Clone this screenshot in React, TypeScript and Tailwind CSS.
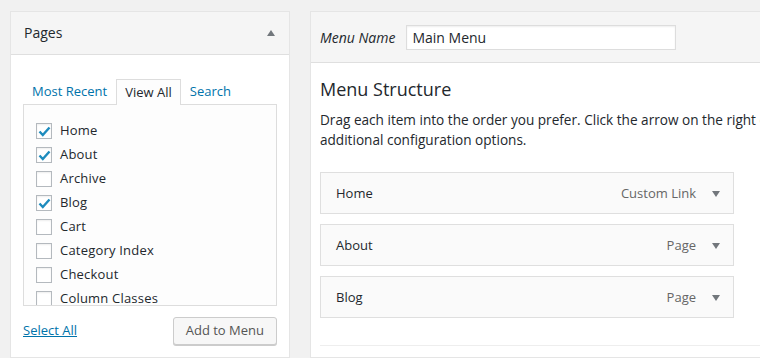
import React from 'react';

const pages = [
    { title: 'Home', checked: true },
    { title: 'About', checked: true },
    { title: 'Archive', checked: false },
    { title: 'Blog', checked: true },
    { title: 'Cart', checked: false },
    { title: 'Category Index', checked: false },
    { title: 'Checkout', checked: false },
    { title: 'Column Classes', checked: false },
];

const menuItems = [
    { title: 'Home', type: 'Custom Link' },
    { title: 'About', type: 'Page' },
    { title: 'Blog', type: 'Page' },
];

function Check({ checked }: { checked: boolean }) {
    return (
        <span className="w-4 h-4 shrink-0 border border-[#b4b9be] bg-white flex items-center justify-center shadow-[inset_0_1px_2px_rgba(0,0,0,0.07)]">
            {checked && (
                <svg width="13" height="11" viewBox="0 0 13 11">
                    <path d="M1.5 5.5 L4.8 9 L11.5 1.5" fill="none" stroke="#1e8cbe" strokeWidth="2.4" />
                </svg>
            )}
        </span>
    );
}

function Caret({ up = false }: { up?: boolean }) {
    return (
        <svg width="8" height="6" viewBox="0 0 8 6">
            <path d={up ? 'M0 6 L4 0 L8 6 Z' : 'M0 0 L8 0 L4 6 Z'} fill="#72777c" />
        </svg>
    );
}

export default function App() {
    return (
        <div
            className="h-[358px] overflow-hidden bg-[#f1f1f1] flex items-stretch pt-[11px] pl-[10px] text-[13px] text-[#23282d]"
            style={{ fontFamily: '"Open Sans", "Liberation Sans", sans-serif' }}
        >
            {/* Pages box */}
            <div className="w-[280px] shrink-0 border border-[#e5e5e5] bg-white flex flex-col">
                <div className="h-[43px] bg-[#f5f5f5] border-b border-[#dfdfdf] flex items-center justify-between pl-[13px] pr-[14px]">
                    <h3 className="text-[14px] leading-none">Pages</h3>
                    <Caret up />
                </div>
                <div className="pt-[24px] px-[12px]">
                    <div className="flex items-end h-[25px]">
                        <span className="px-[8px] h-[25px] flex items-center border border-transparent text-[#0073aa]">Most Recent</span>
                        <span className="px-[8px] h-[26px] flex items-center border border-b-0 border-[#dddddd] bg-[#fdfdfd] relative top-[1px]">View All</span>
                        <span className="px-[8px] h-[25px] flex items-center border border-transparent text-[#0073aa]">Search</span>
                    </div>
                    <div className="h-[202px] border border-[#dddddd] bg-[#fdfdfd] overflow-hidden pt-[14px] pl-[12px]">
                        {pages.map((p) => (
                            <div key={p.title} className="h-[24px] flex items-center gap-[8px]">
                                <Check checked={p.checked} />
                                <span className="tracking-[0.2px]">{p.title}</span>
                            </div>
                        ))}
                    </div>
                    <div className="flex items-center justify-between mt-[11px]">
                        <span className="text-[#0073aa] underline">Select All</span>
                        <button className="h-[28px] px-[12px] border border-[#cccccc] rounded-[3px] bg-[#f7f7f7] text-[#555555] shadow-[0_1px_0_#cccccc]">
                            Add to Menu
                        </button>
                    </div>
                </div>
            </div>

            {/* Menu edit */}
            <div className="ml-[20px] w-[500px] shrink-0 border border-[#e5e5e5] bg-white flex flex-col">
                <div className="h-[51px] bg-[#f5f5f5] border-b border-[#dfdfdf] flex items-center pl-[9px]">
                    <label className="italic text-[14px] mr-[11px]">Menu Name</label>
                    <div className="w-[270px] h-[25px] border border-[#dddddd] bg-white flex items-center px-[5px] text-[14px] shadow-[inset_0_1px_2px_rgba(0,0,0,0.07)]">
                        Main Menu
                    </div>
                </div>
                <div className="pl-[9px]">
                    <h3 className="text-[18px] mt-[14px] leading-[24px]">Menu Structure</h3>
                    <p className="mt-[9px] text-[13.6px] leading-[20px] whitespace-nowrap">
                        Drag each item into the order you prefer. Click the arrow on the right of the item to reveal
                        <br />
                        additional configuration options.
                    </p>
                    <div className="mt-[22px] w-[414px] flex flex-col gap-[10px]">
                        {menuItems.map((m) => (
                            <div key={m.title} className="h-[42px] border border-[#dfdfdf] bg-[#fafafa] flex items-center pl-[15px] pr-[13px] pt-[2px]">
                                <span className="flex-1">{m.title}</span>
                                <span className="text-[#666666] mr-[16px]">{m.type}</span>
                                <Caret />
                            </div>
                        ))}
                    </div>
                    <div className="mt-[27px] border-t border-[#eeeeee]" />
                </div>
            </div>
        </div>
    );
}
